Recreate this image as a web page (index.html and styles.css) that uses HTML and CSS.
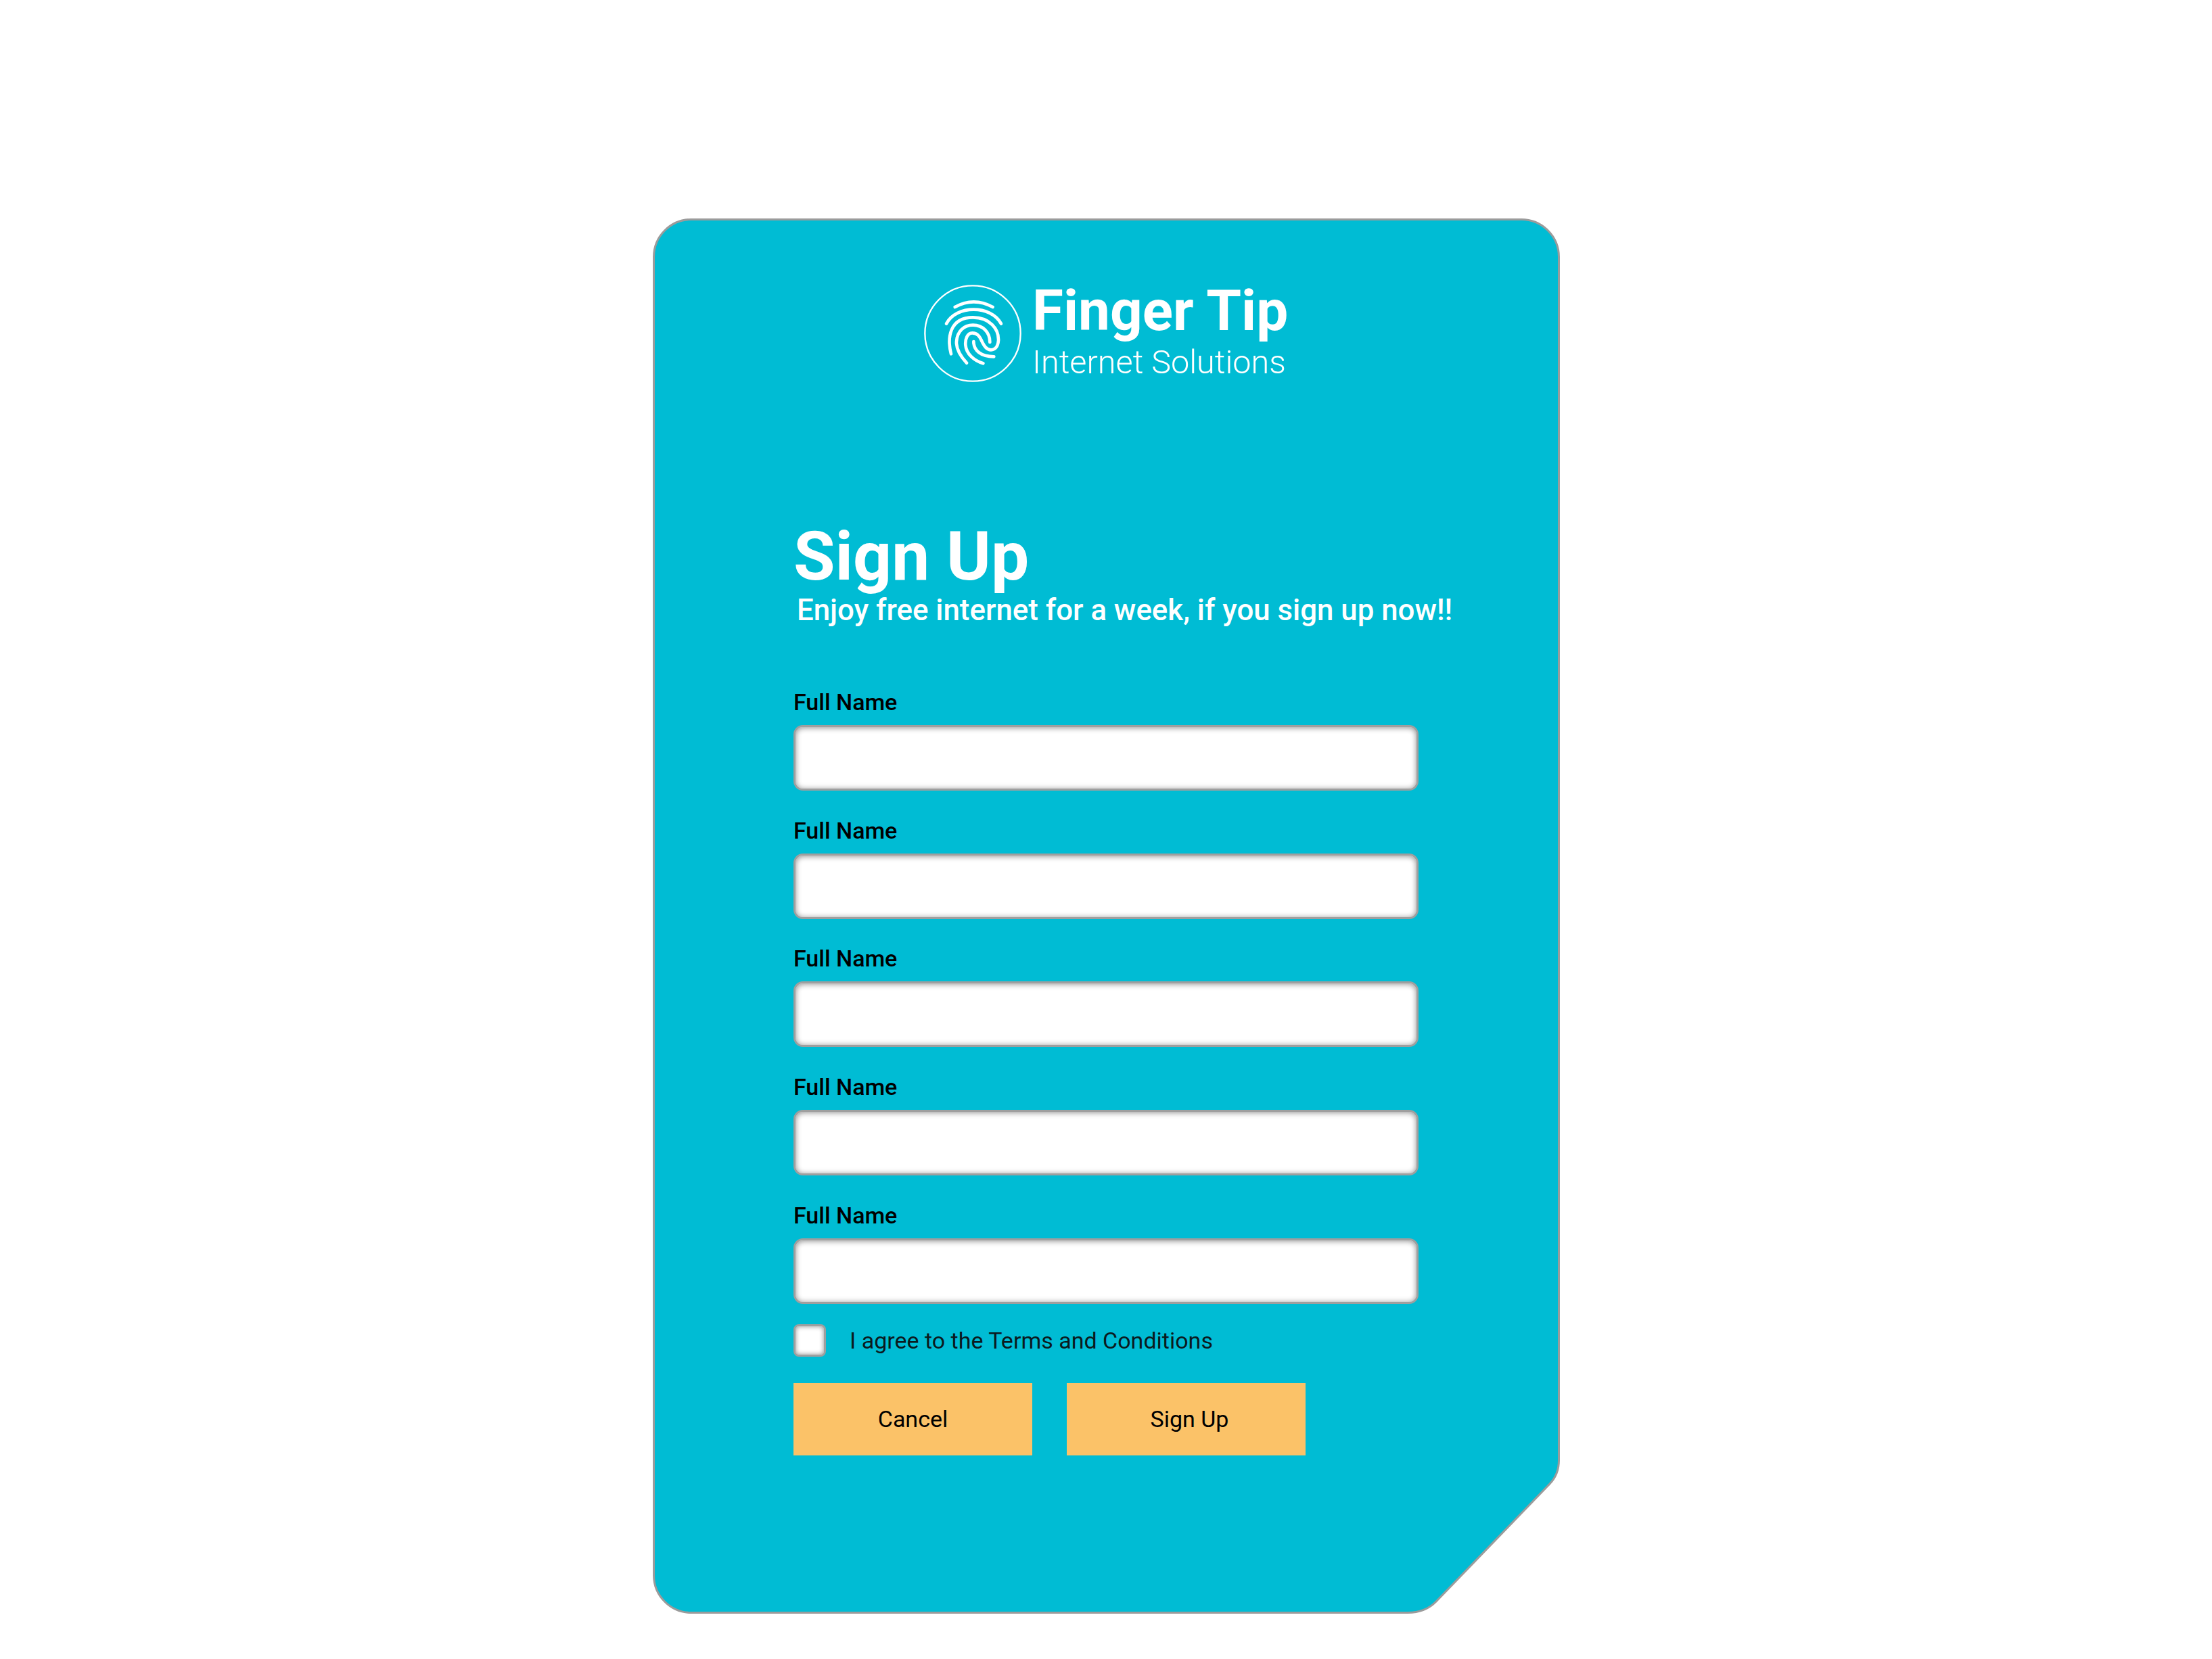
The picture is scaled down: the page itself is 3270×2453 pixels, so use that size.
FILE: index.html
```html
<!DOCTYPE html>
<html>
    <head>
        <title>Finger Tip - Sign Up</title>
        <link rel="stylesheet" href="styles.css">
    </head>
    <body>
        <main class="card">
            <svg class="card-shape" viewBox="0 0 1341 2063" aria-hidden="true">
                <path d="M57 1.5H1284A55.5 55.5 0 0 1 1339.5 57V1836Q1339.5 1857 1326 1871L1158 2045Q1142 2061.5 1116 2061.5H57A55.5 55.5 0 0 1 1.5 2006V57A55.5 55.5 0 0 1 57 1.5Z"/>
            </svg>
            <header class="logo">
                <svg class="logo-icon" viewBox="45 30 438 438" aria-hidden="true">
                    <circle class="logo-ring" cx="264" cy="249" r="212"/>
                    <path d="M185 132Q268 86 353 132"/>
                    <path d="M147 206C190 122 345 122 390 206"/>
                    <path d="M168 340C150 270 160 178 265 178C340 178 380 230 378 280C376 305 365 322 345 322C325 322 315 305 305 285C295 262 285 247 262 247C240 247 230 275 232 300C235 340 270 370 310 382"/>
                    <path d="M237 380C205 345 190 315 192 285C195 240 225 212 265 212C310 212 340 245 340 288"/>
                    <path d="M268 285C268 325 300 352 358 352"/>
                </svg>
                <div class="logo-text">
                    <div class="logo-name">Finger Tip</div>
                    <div class="logo-tagline">Internet Solutions</div>
                </div>
            </header>
            <form class="signup">
                <h1 class="signup-title">Sign Up</h1>
                <p class="signup-intro">Enjoy free internet for a week, if you sign up now!!</p>
                <div class="fields">
                    <div class="field">
                        <label>Full Name</label>
                        <input type="text">
                    </div>
                    <div class="field">
                        <label>Full Name</label>
                        <input type="text">
                    </div>
                    <div class="field">
                        <label>Full Name</label>
                        <input type="text">
                    </div>
                    <div class="field">
                        <label>Full Name</label>
                        <input type="text">
                    </div>
                    <div class="field">
                        <label>Full Name</label>
                        <input type="text">
                    </div>
                </div>
                <label class="terms">
                    <input type="checkbox">
                    <span>I agree to the Terms and Conditions</span>
                </label>
                <div class="actions">
                    <button type="button">Cancel</button>
                    <button type="button" class="submit">Sign Up</button>
                </div>
            </form>
        </main>
    </body>
</html>
```

FILE: styles.css
```css
:root {
    --card-color: #00bcd4;
    --edge-color: #9b9b9b;
    --button-color: #fbc268;
}

*, *::before, *::after {
    box-sizing: border-box;
}

body {
    margin: 0px;
    background-color: #fff;
    font-family: Roboto, sans-serif;
}

.card {
    position: relative;
    width: 1341px;
    height: 2063px;
    margin: 323px 0px 67px 965px;
    padding-top: 95px;
}

.card-shape {
    position: absolute;
    top: 0px;
    left: 0px;
    width: 100%;
    height: 100%;
    z-index: -1;
}

.card-shape path {
    fill: var(--card-color);
    stroke: var(--edge-color);
    stroke-width: 3;
}

.logo {
    display: flex;
    align-items: flex-start;
    gap: 15px;
    padding-left: 400px;
    color: #fff;
}

.logo-icon {
    width: 146px;
    height: 146px;
    margin-top: 2px;
    fill: none;
    stroke: #fff;
    stroke-width: 14;
    stroke-linecap: round;
}

.logo-icon .logo-ring {
    stroke-width: 7;
}

.logo-name {
    font-size: 83.7px;
    line-height: 83px;
    font-weight: 700;
}

.logo-tagline {
    margin-top: 11px;
    font-size: 48.6px;
    line-height: 48px;
    font-weight: 300;
}

.signup {
    padding: 207px 0px 0px 208px;
}

.signup-title {
    margin: 0px;
    font-size: 100px;
    line-height: 100px;
    font-weight: 700;
    color: #fff;
}

.signup-intro {
    margin: 8px 0px 0px 5px;
    font-size: 43.8px;
    line-height: 42px;
    font-weight: 500;
    color: #fff;
}

.fields {
    display: flex;
    flex-direction: column;
    gap: 41.7px;
    margin-top: 99px;
}

.field label {
    display: block;
    margin-bottom: 18px;
    font-size: 34px;
    line-height: 32px;
    font-weight: 500;
    color: #000;
}

.field input {
    display: block;
    width: 924px;
    height: 97px;
    margin-bottom: 1px;
    border: 3px solid #9f9f9f;
    border-radius: 14px;
    background-color: #fff;
    box-shadow: inset 0px 1px 9px rgba(0, 0, 0, 0.45);
    outline: 0px;
}

.terms {
    display: flex;
    align-items: center;
    gap: 35px;
    margin-top: 29px;
    font-size: 34px;
    line-height: 48px;
    color: #0b1a1e;
}

.terms input {
    appearance: none;
    width: 48px;
    height: 48px;
    margin: 0px;
    border: 3px solid #9f9f9f;
    border-radius: 8px;
    background-color: #fff;
    box-shadow: inset 0px 0px 7px rgba(0, 0, 0, 0.45);
}

.actions {
    display: flex;
    gap: 51px;
    margin-top: 39px;
}

.actions button {
    width: 353px;
    height: 107px;
    padding: 0px;
    border: 0px;
    background-color: var(--button-color);
    font-family: inherit;
    font-size: 34px;
    color: #000;
}

.actions .submit {
    padding-left: 10px;
}
```
